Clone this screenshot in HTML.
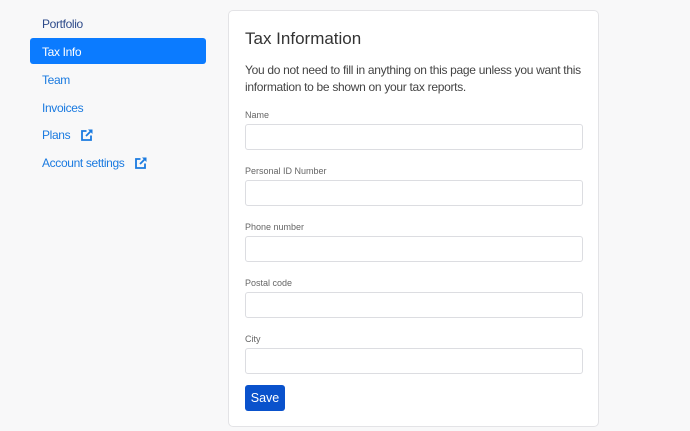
<!DOCTYPE html>
<html><head><style>
body{margin:0;width:690px;height:431px;background:#f8f8f9;font-family:"Liberation Sans",sans-serif;position:relative;overflow:hidden}
.nav a{position:absolute;left:42px;font-size:12px;letter-spacing:-0.35px;color:#1a7ae0;text-decoration:none;line-height:14px}
.act{position:absolute;left:30px;top:38px;width:176px;height:26px;background:#0b7bff;border-radius:3px}
.card{position:absolute;left:228px;top:10px;width:371px;height:417px;background:#fff;border:1px solid #e3e3e6;border-radius:5px;box-sizing:border-box}
h1{position:absolute;left:245px;top:29px;margin:0;font-weight:normal;font-size:17px;color:#333}
.p{position:absolute;left:245px;top:62px;font-size:12px;letter-spacing:-0.3px;line-height:17px;color:#444;width:360px}
.l{position:absolute;left:245px;font-size:9px;color:#666}
.i{position:absolute;left:245px;width:338px;height:26px;border:1px solid #dcdde1;border-radius:3px;box-sizing:border-box;background:#fff}
.b{position:absolute;left:245px;top:385px;width:40px;height:26px;background:#0a52cc;border-radius:3px;color:#fff;font-size:12.5px;line-height:26px;text-align:center}
svg{vertical-align:-2px;margin-left:8px}
</style></head><body>
<div class="act"></div>
<div class="nav">
<a style="top:17px;color:#2d4a8a">Portfolio</a>
<a style="top:45px;color:#fff">Tax Info</a>
<a style="top:73px">Team</a>
<a style="top:101px">Invoices</a>
<a style="top:128px">Plans <svg width="12" height="12" viewBox="0 0 12 12"><path d="M5.5 2H1v9h9V6.5" fill="none" stroke="#1a7ae0" stroke-width="1.8"/><path d="M7 0.5h4.5V5z" fill="#1a7ae0"/><path d="M10.5 1.5 5 7" stroke="#1a7ae0" stroke-width="1.8"/></svg></a>
<a style="top:156px">Account settings <svg width="12" height="12" viewBox="0 0 12 12"><path d="M5.5 2H1v9h9V6.5" fill="none" stroke="#1a7ae0" stroke-width="1.8"/><path d="M7 0.5h4.5V5z" fill="#1a7ae0"/><path d="M10.5 1.5 5 7" stroke="#1a7ae0" stroke-width="1.8"/></svg></a>
</div>
<div class="card"></div>
<h1>Tax Information</h1>
<div class="p">You do not need to fill in anything on this page unless you want this information to be shown on your tax reports.</div>
<div class="l" style="top:110px">Name</div><div class="i" style="top:124px"></div>
<div class="l" style="top:166px">Personal ID Number</div><div class="i" style="top:180px"></div>
<div class="l" style="top:222px">Phone number</div><div class="i" style="top:236px"></div>
<div class="l" style="top:278px">Postal code</div><div class="i" style="top:292px"></div>
<div class="l" style="top:334px">City</div><div class="i" style="top:348px"></div>
<div class="b">Save</div>
</body></html>
